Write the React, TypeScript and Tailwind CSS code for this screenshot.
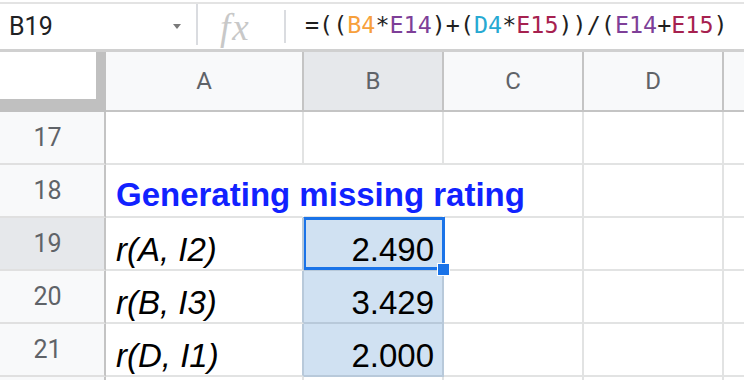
import React from "react";

// formula pieces with their range colours
const formula: { t: string; c?: string }[] = [
  { t: "=((" },
  { t: "B4", c: "text-[#f7a03c]" },
  { t: "*" },
  { t: "E14", c: "text-[#7e3f98]" },
  { t: ")+(" },
  { t: "D4", c: "text-[#27a9d2]" },
  { t: "*" },
  { t: "E15", c: "text-[#a6214f]" },
  { t: "))/(" },
  { t: "E14", c: "text-[#7e3f98]" },
  { t: "+" },
  { t: "E15", c: "text-[#a6214f]" },
  { t: ")" },
];

const cols = ["A", "B", "C", "D", ""];

interface Row {
  num?: number;
  a?: string;
  b?: string;
  title?: boolean;
}

const rows: Row[] = [
  { num: 17 },
  { num: 18, a: "Generating missing rating", title: true },
  { num: 19, a: "r(A, I2)", b: "2.490" },
  { num: 20, a: "r(B, I3)", b: "3.429" },
  { num: 21, a: "r(D, I1)", b: "2.000" },
  {}, // row 22, only its top edge is on screen
];

function FormulaBar() {
  return (
    <div className="pt-[2px]">
      <div className="flex h-[50px] border-t-2 border-b-[3px] border-t-[#e3e3e3] border-b-[#d0d0d0] bg-white">
        {/* name box */}
        <div className="flex w-[196px] items-center justify-between pl-[9px] pr-[15px]">
          <span className="text-[25px] leading-none text-[#202124] font-['Roboto',sans-serif]">B19</span>
          <span className="h-0 w-0 border-x-[4px] border-t-[5px] border-x-transparent border-t-[#7a7a7a]" />
        </div>
        <div className="h-[41px] w-[2px] bg-[#dadce0]" />
        {/* fx */}
        <div className="flex w-[86px] items-center pl-[22px] pt-[2px]">
          <span className="text-[37px] italic leading-none tracking-[2px] text-[#c8c8c8] font-['Liberation_Serif',serif]">
            fx
          </span>
        </div>
        <div className="mt-[6px] h-[33px] w-[2px] bg-[#dadce0]" />
        {/* formula */}
        <div className="flex flex-1 items-center pl-[19px] pb-[1px]">
          <span className="whitespace-pre text-[23.4px] leading-none text-[#1f1f1f] font-['DejaVu_Sans_Mono',monospace]">
            {formula.map((p, i) => (
              <span key={i} className={p.c}>
                {p.t}
              </span>
            ))}
          </span>
        </div>
      </div>
    </div>
  );
}

export default function App() {
  return (
    <div className="h-[380px] w-[744px] overflow-hidden bg-white">
      <FormulaBar />

      {/* sheet grid */}
      <div className="grid grid-cols-[106px_198px_140px_140px_140px_20px] grid-rows-[60px_53px_53px_53px_53px_53px_53px] font-['Roboto',sans-serif]">
        {/* corner with frozen handles */}
        <div className="bg-[#c0c0c0]">
          <div className="h-[47px] w-[96px] bg-white" />
        </div>
        {cols.map((c, i) => (
          <div
            key={i}
            className={`flex items-center justify-center border-b-2 border-b-[#c4c4c4] text-[24px] text-[#5f6368] ${
              i < 4 ? "border-r-2 border-r-[#c4c4c4]" : ""
            } ${c === "B" ? "bg-[#e6e8eb]" : "bg-[#f8f9fa]"}`}
          >
            {c}
          </div>
        ))}

        {rows.map((r, idx) => {
          const inRange = r.b !== undefined;
          const active = r.num === 19;
          return (
            <React.Fragment key={idx}>
              <div
                className={`flex items-center justify-center border-r-2 border-b-2 border-r-[#c4c4c4] border-b-[#e0e0e0] pr-[9px] text-[25px] text-[#5f6368] ${
                  active ? "bg-[#e6e8eb]" : "bg-[#f8f9fa]"
                }`}
              >
                {r.num}
              </div>
              {/* column A, the title overflows across B */}
              <div
                className={`relative z-[1] flex items-end overflow-visible whitespace-nowrap border-r-2 border-b-2 border-b-[#e2e3e3] pl-[10px] font-['Liberation_Sans',Arial,sans-serif] text-[33px] leading-[33px] ${
                  inRange ? "border-r-[#b8c9da]" : r.title ? "border-r-transparent" : "border-r-[#e2e3e3]"
                } ${r.title ? "pb-[5px] font-bold text-[#1122ff]" : "pb-[3px] italic text-black"}`}
              >
                {r.a}
              </div>
              {/* column B */}
              <div
                className={`relative flex items-end justify-end border-r-2 border-b-2 pr-[8px] pb-[3px] font-['Liberation_Sans',Arial,sans-serif] text-[33px] leading-[33px] text-black ${
                  inRange
                    ? "border-[#b8c9da] bg-[#d0e1f2]"
                    : r.title
                    ? "border-r-transparent border-b-[#e2e3e3]"
                    : "border-[#e2e3e3]"
                }`}
              >
                {r.b}
                {active && (
                  <>
                    <div className="absolute -left-px -top-px h-[53px] w-[142px] border-[3px] border-[#1a73e8]" />
                    <div className="absolute left-[133px] top-[45px] z-10 h-[13px] w-[13px] border border-white bg-[#1a73e8]" />
                  </>
                )}
              </div>
              {/* C, D, E */}
              <div className="border-r-2 border-b-2 border-[#e2e3e3]" />
              <div className="border-r-2 border-b-2 border-[#e2e3e3]" />
              <div className="border-b-2 border-[#e2e3e3]" />
            </React.Fragment>
          );
        })}
      </div>
    </div>
  );
}
